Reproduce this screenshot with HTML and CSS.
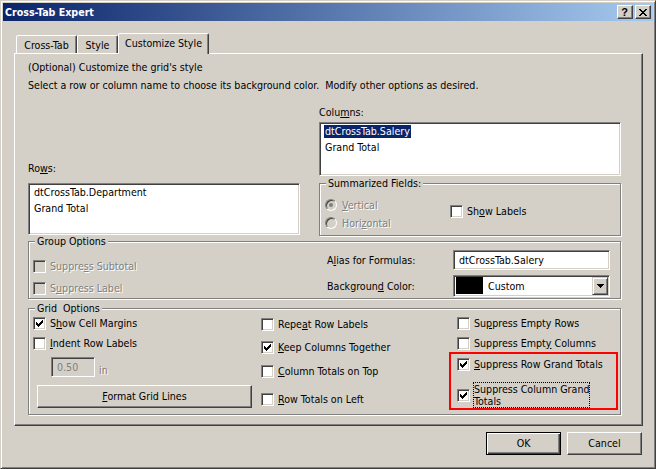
FILE: index.html
```html
<!DOCTYPE html>
<html>
<head>
<meta charset="utf-8">
<link rel="stylesheet" href="styles.css">
</head>
<body>
<div class="window">
  <div class="titlebar">
    <span class="title">Cross-Tab Expert</span>
    <div class="tbtns">
      <span class="tbtn help">?</span>
      <span class="tbtn close"><svg width="8" height="7" viewBox="0 0 8 7"><path d="M0 0h2v1H0z M6 0h2v1H6z M1 1h2v1H1z M5 1h2v1H5z M2 2h4v1H2z M3 3h2v1H3z M2 4h4v1H2z M1 5h2v1H1z M5 5h2v1H5z M0 6h2v1H0z M6 6h2v1H6z" fill="#000"/></svg></span>
    </div>
  </div>

  <div class="tabs">
    <div class="tab t1">Cross-Tab</div>
    <div class="tab t2">Style</div>
    <div class="tab t3 active">Customize Style</div>
  </div>

  <div class="panel">
    <p class="intro">(Optional) Customize the grid's style</p>
    <p class="intro">Select a row or column name to choose its background color.&nbsp; Modify other options as desired.</p>

    <div class="fields">
      <div class="col-rows">
        <div class="label">Ro<u>w</u>s:</div>
        <div class="listbox rows">
          <div class="item">dtCrossTab.Department</div>
          <div class="item">Grand Total</div>
        </div>
      </div>
      <div class="col-cols">
        <div class="label">Colu<u>m</u>ns:</div>
        <div class="listbox cols">
          <div class="item"><span class="sel">dtCrossTab.Salery</span></div>
          <div class="item">Grand Total</div>
        </div>
        <div class="group summ">
          <span class="legend">Summarized Fields:</span>
          <div class="radios">
            <div class="radio-row"><span class="rb on"></span><span class="dis-text"><u>V</u>ertical</span></div>
            <div class="radio-row"><span class="rb"></span><span class="dis-text">Hori<u>z</u>ontal</span></div>
          </div>
          <div class="row showlabels"><span class="cb"></span><span class="txt">Sh<u>o</u>w Labels</span></div>
        </div>
      </div>
    </div>

    <div class="group gopts">
      <span class="legend">Group Options</span>
      <div class="gopts-left">
        <div class="row"><span class="cb dis"></span><span class="txt dis-text">Suppre<u>s</u>s Subtotal</span></div>
        <div class="row r2"><span class="cb dis"></span><span class="txt dis-text">S<u>u</u>ppress Label</span></div>
      </div>
      <div class="gopts-right">
        <div class="frow">
          <span class="flabel">A<u>l</u>ias for Formulas:</span>
          <div class="edit alias">dtCrossTab.Salery</div>
        </div>
        <div class="frow r2">
          <span class="flabel">Backgroun<u>d</u> Color:</span>
          <div class="combo">
            <span class="swatch"></span>
            <span class="ctext">Custom</span>
            <span class="dropbtn"><svg width="7" height="4" viewBox="0 0 7 4"><path d="M0 0h7v1H0z M1 1h5v1H1z M2 2h3v1H2z M3 3h1v1H3z" fill="#000"/></svg></span>
          </div>
        </div>
      </div>
    </div>

    <div class="group gridg">
      <span class="legend">Grid&nbsp; Options</span>
      <div class="gcol c1">
        <div class="row"><span class="cb"><svg width="11" height="11" viewBox="0 0 11 11"><path d="M2 4h1v3H2z M3 5h1v3H3z M4 6h1v3H4z M5 5h1v3H5z M6 4h1v3H6z M7 3h1v3H7z M8 2h1v3H8z" fill="#000"/></svg></span><span class="txt">S<u>h</u>ow Cell Margins</span></div>
        <div class="row g7"><span class="cb"></span><span class="txt"><u>I</u>ndent Row Labels</span></div>
        <div class="indent g7">
          <div class="edit small">0.50</div>
          <span class="dis-text unit">in</span>
        </div>
        <button class="btn fgl"><u>F</u>ormat Grid Lines</button>
      </div>
      <div class="gcol c2">
        <div class="row"><span class="cb"></span><span class="txt">Repe<u>a</u>t Row Labels</span></div>
        <div class="row m10"><span class="cb"><svg width="11" height="11" viewBox="0 0 11 11"><path d="M2 4h1v3H2z M3 5h1v3H3z M4 6h1v3H4z M5 5h1v3H5z M6 4h1v3H6z M7 3h1v3H7z M8 2h1v3H8z" fill="#000"/></svg></span><span class="txt"><u>K</u>eep Columns Together</span></div>
        <div class="row m11"><span class="cb"></span><span class="txt"><u>C</u>olumn Totals on Top</span></div>
        <div class="row m15"><span class="cb"></span><span class="txt"><u>R</u>ow Totals on Left</span></div>
      </div>
      <div class="gcol c3">
        <div class="row"><span class="cb"></span><span class="txt">Su<u>p</u>press Empty Rows</span></div>
        <div class="row g7"><span class="cb"></span><span class="txt">Suppress Empt<u>y</u> Columns</span></div>
        <div class="redbox">
          <div class="row"><span class="cb"><svg width="11" height="11" viewBox="0 0 11 11"><path d="M2 4h1v3H2z M3 5h1v3H3z M4 6h1v3H4z M5 5h1v3H5z M6 4h1v3H6z M7 3h1v3H7z M8 2h1v3H8z" fill="#000"/></svg></span><span class="txt"><u>S</u>uppress Row Grand Totals</span></div>
          <div class="row2line"><span class="cb"><svg width="11" height="11" viewBox="0 0 11 11"><path d="M2 4h1v3H2z M3 5h1v3H3z M4 6h1v3H4z M5 5h1v3H5z M6 4h1v3H6z M7 3h1v3H7z M8 2h1v3H8z" fill="#000"/></svg></span><span class="focus">Suppress Column Grand<br>Totals</span></div>
        </div>
      </div>
    </div>
  </div>

  <div class="buttons">
    <button class="btn default">OK</button>
    <button class="btn">Cancel</button>
  </div>
</div>
</body>
</html>
```

FILE: styles.css
```css
* { box-sizing: border-box; }

body {
  margin: 0;
  background: #d4d0c8;
  font-family: "DejaVu Sans Condensed", "Liberation Sans", Arial, sans-serif;
  font-size: 10.6px;
  color: #000;
}

u { text-decoration: underline; }

.window {
  width: 656px;
  height: 469px;
  background: #d4d0c8;
  border: 1px solid;
  border-color: #d4d0c8 #404040 #404040 #d4d0c8;
  box-shadow: inset 1px 1px #fff, inset -1px -1px #808080;
  padding: 2px;
  display: flex;
  flex-direction: column;
  overflow: hidden;
}

/* Title bar */
.titlebar {
  height: 18px;
  flex: none;
  background: linear-gradient(to right, #0a246a, #a6caf0);
  display: flex;
  align-items: center;
  justify-content: space-between;
  padding: 0 2px;
}
.title {
  color: #fff;
  font-weight: bold;
  line-height: 13px;
}
.tbtns { display: flex; gap: 2px; }
.tbtn {
  width: 16px;
  height: 14px;
  background: #d4d0c8;
  border: 1px solid;
  border-color: #fff #404040 #404040 #fff;
  box-shadow: inset -1px -1px #808080;
  display: flex;
  align-items: center;
  justify-content: center;
}
.tbtn svg { display: block; }
.help {
  font-family: "Liberation Sans", Arial, sans-serif;
  font-weight: bold;
  font-size: 11px;
  line-height: 11px;
  padding-right: 1px;
}

/* Tabs */
.tabs {
  display: flex;
  align-items: flex-end;
  height: 21px;
  flex: none;
  margin: 12px 0 0 13px;
}
.tab {
  height: 18px;
  margin-bottom: 1px;
  background: #d4d0c8;
  border: 1px solid;
  border-bottom: none;
  border-color: #fff #404040 transparent #fff;
  box-shadow: inset -1px 0 #808080;
  border-radius: 2px 2px 0 0;
  display: flex;
  align-items: center;
  justify-content: center;
  padding-top: 1px;
  line-height: 13px;
}
.t1 { width: 61px; }
.t2 { width: 41px; }
.t3 { width: 91px; }
.tab.active {
  height: 21px;
  margin-bottom: 0;
  padding-top: 0;
  padding-bottom: 1px;
  position: relative;
  z-index: 1;
}

/* Panel */
.panel {
  width: 629px;
  height: 373px;
  flex: none;
  margin: -1px 0 0 11px;
  border: 1px solid;
  border-color: #fff #404040 #404040 #fff;
  box-shadow: inset -1px -1px #808080;
  padding: 4px 0 0 13px;
}
.intro {
  margin: 0;
  line-height: 18px;
  white-space: nowrap;
}

.fields {
  display: grid;
  grid-template-columns: 272px 302px;
  column-gap: 19px;
  align-items: end;
}
.label { line-height: 13px; }
.col-cols .label { margin-top: 12px; margin-bottom: 3px; }
.col-rows .label { margin-bottom: 8px; }

.listbox {
  background: #fff;
  border: 1px solid;
  border-color: #808080 #fff #fff #808080;
  box-shadow: inset 1px 1px #404040, inset -1px -1px #d4d0c8;
  padding: 2px 4px 0 5px;
}
.listbox.rows { height: 52px; margin-bottom: 1px; }
.listbox.cols { height: 54px; }
.item {
  line-height: 13px;
  height: 13px;
  margin-bottom: 3px;
  white-space: nowrap;
}
.sel {
  display: inline-block;
  background: #0a246a;
  color: #fff;
  margin-left: -1px;
  padding: 0 1px;
  line-height: 13px;
}

/* Group boxes */
.group {
  position: relative;
  border: 1px solid #808080;
  box-shadow: inset 1px 1px #fff, 1px 1px #fff;
}
.legend {
  position: absolute;
  top: -7px;
  left: 6px;
  padding: 0 2px;
  background: #d4d0c8;
  line-height: 13px;
  white-space: nowrap;
}

.summ {
  margin-top: 7px;
  height: 53px;
  display: flex;
}
.radios {
  width: 130px;
  padding: 15px 0 0 5px;
}
.radio-row {
  display: flex;
  align-items: center;
  height: 12px;
  gap: 5px;
  margin-bottom: 6px;
  line-height: 13px;
}
.rb {
  width: 12px;
  height: 12px;
  flex: none;
  border-radius: 50%;
  border: 1px solid;
  border-color: #808080 #fff #fff #808080;
  box-shadow: inset 1px 1px #404040, inset -1px -1px #d4d0c8;
  background: #d4d0c8;
  display: flex;
  align-items: center;
  justify-content: center;
}
.rb.on::after {
  content: "";
  width: 4px;
  height: 4px;
  border-radius: 50%;
  background: #808080;
}
.showlabels { margin-top: 21px; }

.dis-text {
  color: #808080;
  text-shadow: 1px 1px 0 #fff;
}

/* Checkbox rows */
.row {
  display: flex;
  align-items: center;
  height: 13px;
  line-height: 13px;
  white-space: nowrap;
}
.row .txt { margin-left: 4px; }
.cb {
  width: 13px;
  height: 13px;
  flex: none;
  background: #fff;
  border: 1px solid;
  border-color: #808080 #fff #fff #808080;
  box-shadow: inset 1px 1px #404040, inset -1px -1px #d4d0c8;
}
.cb.dis { background: #d4d0c8; }
.cb svg { display: block; }

/* Group options */
.gopts {
  width: 593px;
  height: 58px;
  margin-top: 5px;
  display: flex;
}
.gopts-left {
  width: 298px;
  padding: 18px 0 0 4px;
}
.gopts-left .r2 { margin-top: 9px; }
.gopts-right { padding-top: 8px; }
.frow {
  display: flex;
  align-items: center;
  height: 20px;
}
.frow.r2 { height: 22px; margin-top: 5px; }
.flabel { width: 126px; line-height: 13px; }

.edit {
  height: 20px;
  background: #fff;
  border: 1px solid;
  border-color: #808080 #fff #fff #808080;
  box-shadow: inset 1px 1px #404040, inset -1px -1px #d4d0c8;
  padding: 0 5px;
  display: flex;
  align-items: center;
  line-height: 13px;
}
.edit.alias { width: 157px; }
.edit.small {
  width: 44px;
  background: #d4d0c8;
  color: #808080;
}

.combo {
  width: 157px;
  height: 22px;
  background: #fff;
  border: 1px solid;
  border-color: #808080 #fff #fff #808080;
  box-shadow: inset 1px 1px #404040, inset -1px -1px #d4d0c8;
  padding: 1px;
  display: flex;
  align-items: stretch;
}
.swatch {
  width: 27px;
  height: 17px;
  margin-left: 1px;
  background: #000;
  flex: none;
}
.ctext {
  flex: 1;
  margin-left: 5px;
  line-height: 18px;
}
.dropbtn {
  width: 16px;
  height: 18px;
  flex: none;
  background: #d4d0c8;
  border: 1px solid;
  border-color: #d4d0c8 #404040 #404040 #d4d0c8;
  box-shadow: inset 1px 1px #fff, inset -1px -1px #808080;
  display: flex;
  align-items: center;
  justify-content: center;
}
.dropbtn svg { display: block; }

/* Grid options */
.gridg {
  width: 593px;
  height: 107px;
  margin-top: 9px;
  display: flex;
  padding-left: 4px;
}
.gcol { display: flex; flex-direction: column; align-items: flex-start; }
.c1 { width: 228px; padding-top: 8px; }
.c2 { width: 196px; padding-top: 9px; }
.c3 { padding-top: 8px; }
.g7 { margin-top: 7px; }
.m10 { margin-top: 10px; }
.m11 { margin-top: 11px; }
.m15 { margin-top: 15px; }

.indent {
  display: flex;
  align-items: flex-end;
  height: 20px;
  padding-left: 18px;
}
.unit {
  margin-left: 4px;
  line-height: 13px;
}

.btn {
  font: inherit;
  color: #000;
  background: #d4d0c8;
  border: 1px solid;
  border-color: #fff #404040 #404040 #fff;
  box-shadow: inset -1px -1px #808080;
  padding: 0;
  height: 23px;
  width: 75px;
  line-height: 13px;
}
.btn.fgl {
  width: 215px;
  margin-top: 8px;
  margin-left: 4px;
}
.btn.default {
  border-color: #000;
  box-shadow: inset 1px 1px #fff, inset -1px -1px #404040, inset -2px -2px #808080;
}

.redbox {
  margin-top: 2px;
  margin-left: -8px;
  width: 169px;
  border: 2px solid #ff0000;
  padding: 4px 0 0 6px;
}
.row2line {
  display: flex;
  align-items: center;
  margin-top: 11px;
}
.focus {
  margin-left: 3px;
  border: 1px dotted #000;
  line-height: 12px;
  white-space: nowrap;
}

/* Dialog buttons */
.buttons {
  display: flex;
  justify-content: flex-end;
  gap: 6px;
  margin: 6px 11px 0 0;
  flex: none;
}
```
